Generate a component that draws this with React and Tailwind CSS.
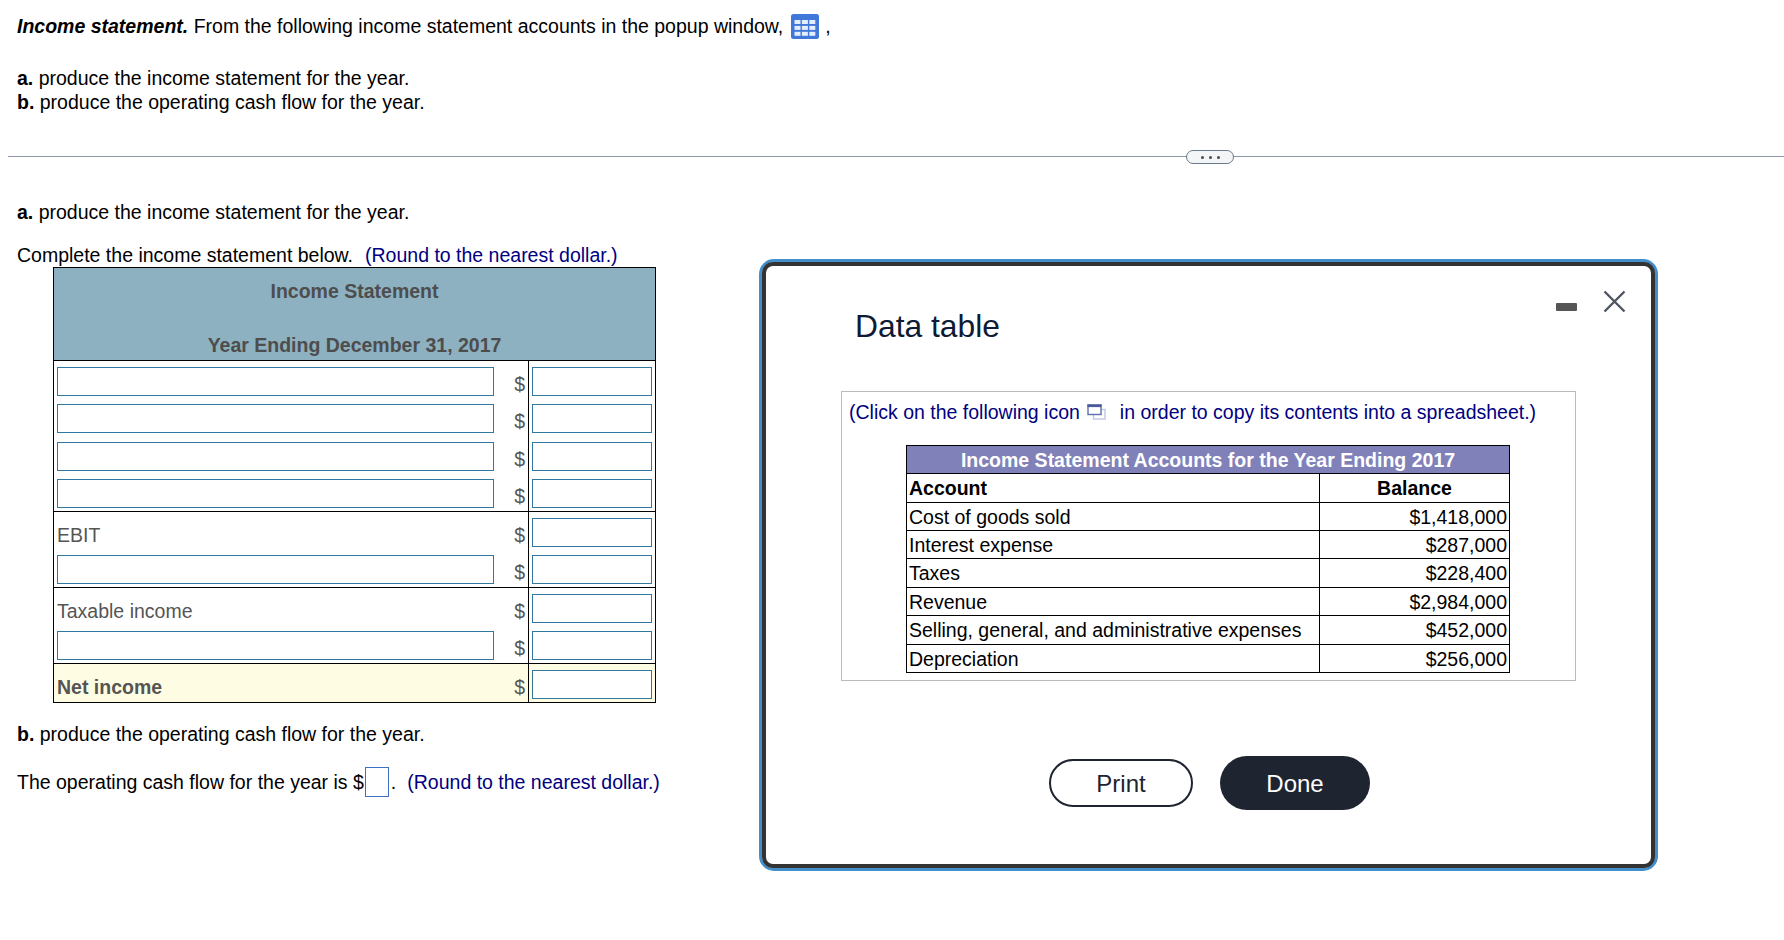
import React from 'react'

const rows = [
  { input: true, height: 'h-[37px]', top: true },
  { input: true, height: 'h-[38px]' },
  { input: true, height: 'h-[37px]' },
  { input: true, height: 'h-[39px]' },
  { label: 'EBIT', height: 'h-[37px]', top: true },
  { input: true, height: 'h-[39px]' },
  { label: 'Taxable income', height: 'h-[37px]', top: true },
  { input: true, height: 'h-[39px]' },
  { label: 'Net income', height: 'h-[39px]', top: true, total: true },
]

const accounts = [
  ['Cost of goods sold', '$1,418,000', 'h-[28px]'],
  ['Interest expense', '$287,000', 'h-[28px]'],
  ['Taxes', '$228,400', 'h-[29px]'],
  ['Revenue', '$2,984,000', 'h-[28px]'],
  ['Selling, general, and administrative expenses', '$452,000', 'h-[29px]'],
  ['Depreciation', '$256,000', 'h-[28px]'],
]

function GridIcon() {
  const cells = []
  for (let r = 0; r < 3; r++) {
    for (let c = 0; c < 3; c++) {
      cells.push(<rect key={r + '-' + c} x={3.5 + c * 7.4} y={6 + r * 5.9} width="6" height="4" fill="#e4edfc" />)
    }
  }
  return (
    <svg width="28" height="25" viewBox="0 0 28 25" className="shrink-0">
      <rect width="28" height="25" rx="2.5" fill="#3f78d8" />
      {cells}
    </svg>
  )
}

function CopyIcon() {
  return (
    <svg width="19" height="16" viewBox="0 0 19 16" fill="none" className="shrink-0">
      <rect x="6.5" y="5.5" width="11.5" height="9.5" fill="#fff" stroke="#c3cae8" strokeWidth="1.5" />
      <rect x="1" y="1" width="13" height="9.5" fill="#fff" stroke="#5f6db0" strokeWidth="1.4" />
      <rect x="0.5" y="0.5" width="14" height="2.6" fill="#4a5a9c" />
    </svg>
  )
}

function StatementTable() {
  return (
    <table className="w-[603px] ml-[36px] table-fixed border-separate border-spacing-0 border border-black">
      <colgroup>
        <col className="w-[446px]" />
        <col className="w-[28px]" />
        <col className="w-[127px]" />
      </colgroup>
      <thead>
        <tr>
          <th colSpan={3} className="h-[92px] bg-[#8db1c0] text-[#4d4d4d] font-bold text-center align-top">
            <div className="pt-[11px]">Income Statement</div>
            <div className="mt-[30px]">Year Ending December 31, 2017</div>
          </th>
        </tr>
      </thead>
      <tbody>
        {rows.map((row, i) => (
          <tr key={i} className={row.total ? 'bg-[#fefde3]' : ''}>
            <td className={row.height + ' pl-[3px] align-top border-black ' + (row.top ? 'border-t' : '')}>
              {row.input ? (
                <div className={(row.top ? 'mt-[6px]' : 'mt-[7px]') + ' h-[29px] w-[437px] border border-[#30789f] bg-white'}></div>
              ) : (
                <div className={'mt-[11px] text-[#555] ' + (row.total ? 'font-bold' : '')}>{row.label}</div>
              )}
            </td>
            <td className={'pr-[3px] text-right align-top text-[#555] border-black ' + (row.top ? 'border-t' : '')}>
              <div className={row.top ? 'mt-[11px]' : 'mt-[12px]'}>$</div>
            </td>
            <td className={'pl-[3px] align-top border-l border-black ' + (row.top ? 'border-t' : '')}>
              <div className={(row.top ? 'mt-[6px]' : 'mt-[7px]') + ' h-[29px] w-[120px] border border-[#30789f] bg-white'}></div>
            </td>
          </tr>
        ))}
      </tbody>
    </table>
  )
}

function DataModal() {
  return (
    <div className="absolute left-[759px] top-[259px] w-[899px] h-[612px] rounded-[15px] border-[3px] border-[#428fcb]">
      <div className="relative h-full rounded-[11px] border-4 border-[#333]">
        <div className="absolute left-[790px] top-[37px] w-[21px] h-[8px] rounded-[1px] bg-[#555]"></div>
        <svg width="23" height="23" viewBox="0 0 23 23" className="absolute left-[837px] top-[24px]">
          <path d="M1.5 1.5 L21.5 21.5 M21.5 1.5 L1.5 21.5" stroke="#4f5660" strokeWidth="2.4" fill="none" />
        </svg>

        <h2 className="pt-[42px] pl-[89px] text-[31.8px] leading-[36px] text-[#0f1a35]">Data table</h2>

        <div className="mt-[47px] ml-[75px] w-[735px] h-[290px] border border-[#bbb] pt-[8px] pl-[7px]">
          <div className="flex items-center h-6 text-[#000080]">
            <span>(Click on the following icon</span>
            <span className="ml-[7px] mr-[14px]"><CopyIcon /></span>
            <span>in order to copy its contents into a spreadsheet.)</span>
          </div>
          <table className="mt-[21px] ml-[57px] w-[603px] table-fixed border-collapse border border-black">
            <colgroup>
              <col className="w-[413px]" />
              <col className="w-[190px]" />
            </colgroup>
            <thead>
              <tr>
                <th colSpan={2} className="h-[28px] bg-[#8181b9] text-white font-bold text-center border border-black">
                  Income Statement Accounts for the Year Ending 2017
                </th>
              </tr>
              <tr>
                <th className="h-[29px] px-[2px] text-left font-bold border border-black">Account</th>
                <th className="font-bold text-center border border-black">Balance</th>
              </tr>
            </thead>
            <tbody>
              {accounts.map(([name, value, height]) => (
                <tr key={name}>
                  <td className={height + ' px-[2px] border border-black'}>{name}</td>
                  <td className="px-[2px] text-right border border-black">{value}</td>
                </tr>
              ))}
            </tbody>
          </table>
        </div>

        <div className="mt-[75px] ml-[283px] flex items-center gap-[27px] text-[24px]">
          <button className="w-[144px] h-[48px] pt-px rounded-[24px] border-[2.5px] border-[#1e2430] bg-white text-[#1e2430]">Print</button>
          <button className="w-[150px] h-[54px] pt-px rounded-[27px] bg-[#1e2430] text-white">Done</button>
        </div>
      </div>
    </div>
  )
}

export default function App() {
  return (
    <div className="relative w-[1784px] h-[940px] overflow-hidden bg-white text-black text-[19.5px] leading-6 font-['Liberation_Sans',Arial,sans-serif]">
      <div className="pl-[17px] pt-[14px] flex items-center h-[38px]">
        <span><b><i>Income statement.</i></b> From the following income statement accounts in the popup window,</span>
        <span className="ml-[8px]"><GridIcon /></span>
        <span className="ml-[6px]">,</span>
      </div>
      <p className="mt-[28px] pl-[17px]"><b>a.</b> produce the income statement for the year.</p>
      <p className="pl-[17px]"><b>b.</b> produce the operating cash flow for the year.</p>

      <div className="relative mt-[42px] ml-2 h-px bg-[#8a96a8]">
        <div className="absolute left-[1178px] -top-[6px] w-[48px] h-[14px] rounded-[7px] border-[1.5px] border-[#6b7a8a] bg-[#f3f5f7] flex items-center justify-center gap-[5px]">
          <span className="w-[3px] h-[3px] rounded-full bg-[#444c56]"></span>
          <span className="w-[3px] h-[3px] rounded-full bg-[#444c56]"></span>
          <span className="w-[3px] h-[3px] rounded-full bg-[#444c56]"></span>
        </div>
      </div>

      <p className="mt-[43px] pl-[17px]"><b>a.</b> produce the income statement for the year.</p>
      <p className="mt-[19px] pl-[17px]">Complete the income statement below.<span className="ml-[12px] text-[#000080]">(Round to the nearest dollar.)</span></p>
      <div className="pl-[17px]">
        <StatementTable />
      </div>

      <p className="mt-[19px] pl-[17px]"><b>b.</b> produce the operating cash flow for the year.</p>
      <div className="mt-6 pl-[17px] flex items-center h-6">
        <span>The operating cash flow for the year is $</span>
        <span className="ml-[1px] w-[24px] h-[30px] border border-[#3f6fc4] bg-white shrink-0"></span>
        <span className="ml-[2px]">.</span>
        <span className="ml-[11px] text-[#000080]">(Round to the nearest dollar.)</span>
      </div>

      <DataModal />
    </div>
  )
}
